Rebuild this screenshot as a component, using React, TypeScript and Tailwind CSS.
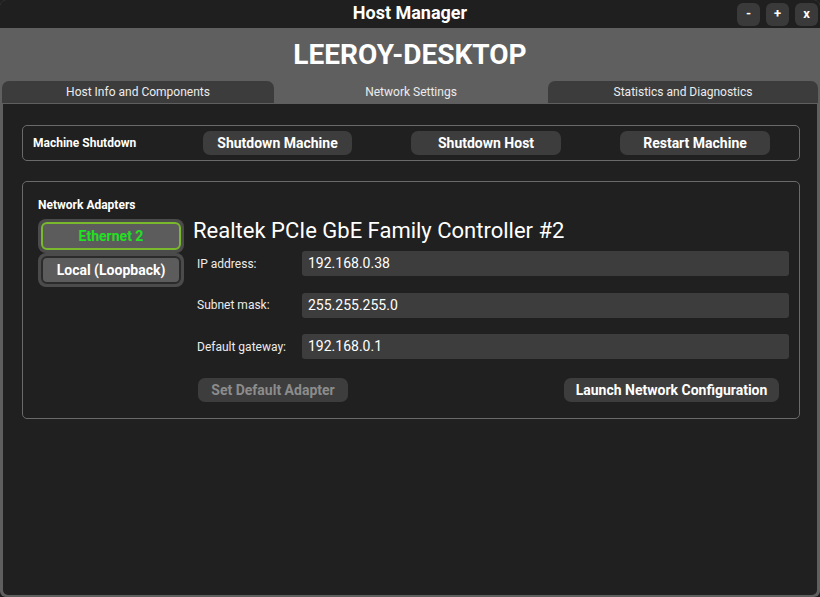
import React from 'react'

const font = { fontFamily: 'Roboto, "Liberation Sans", sans-serif' }

function PillButton({ label, width, disabled = false }: { label: string; width: string; disabled?: boolean }) {
  return (
    <button
      type="button"
      className={`${width} h-[24px] rounded-[7px] bg-[#3d3d3d] text-[14px] font-bold leading-none ${
        disabled ? 'text-[#8c8c8c]' : 'text-white'
      }`}
    >
      {label}
    </button>
  )
}

function AdapterButton({ label, selected }: { label: string; selected?: boolean }) {
  return (
    <div className="rounded-[8px] bg-[#4b4b4b] p-[3px]">
      <div
        className={`flex h-[28px] items-center justify-center rounded-[6px] border-2 bg-[#5c5c5c] text-[14px] font-bold ${
          selected ? 'border-[#7ab82e] text-[#22e022]' : 'border-[#2b2b2b] text-white'
        }`}
      >
        {label}
      </div>
    </div>
  )
}

function Field({ label, value }: { label: string; value: string }) {
  return (
    <div className="flex items-center">
      <div className="w-[109px] pl-[4px] text-[12px] text-[#ececec]">{label}</div>
      <div className="flex h-[25px] flex-1 items-center rounded-[3px] bg-[#3d3d3d] px-[6px] text-[14px] text-white">
        {value}
      </div>
    </div>
  )
}

export default function App() {
  return (
    <div className="h-[597px] w-[820px] overflow-hidden bg-[#1f1f1f]" style={font}>
      <div className="flex h-full flex-col overflow-hidden rounded-[6px] bg-[#5f5f5f]">
        {/* title bar */}
        <div className="grid h-[28px] grid-cols-[1fr_auto_1fr] items-center bg-[#1f1f1f]">
          <div />
          <div className="pb-[3px] text-[18px] font-bold leading-none text-white">Host Manager</div>
          <div className="flex justify-end gap-[6px] pr-[2px]">
            {['-', '+', 'x'].map((s) => (
              <div
                key={s}
                className="flex h-[23px] w-[23px] items-center justify-center rounded-[6px] bg-[#3a3a3a] text-[13px] font-bold text-white"
              >
                {s}
              </div>
            ))}
          </div>
        </div>

        {/* host name */}
        <div className="flex h-[53px] items-center justify-center text-[28px] font-bold text-white">
          LEEROY-DESKTOP
        </div>

        {/* tabs */}
        <div className="flex h-[22px] px-[2px] text-[12px] leading-none text-[#ececec]">
          <div className="flex w-[272px] items-center justify-center rounded-t-[7px] bg-[#3c3c3c]">Host Info and Components</div>
          <div className="flex w-[274px] items-center justify-center">Network Settings</div>
          <div className="flex flex-1 items-center justify-center rounded-t-[7px] bg-[#3c3c3c]">Statistics and Diagnostics</div>
        </div>

        {/* content */}
        <div className="mx-[3px] mb-[2px] mt-[1px] flex-1 rounded-b-[5px] bg-[#202020] pl-[19px] pr-[17px] pt-[21px]">
          <div className="flex h-[36px] items-center rounded-[5px] border border-[#6a6a6a]">
            <div className="w-[180px] pl-[10px] text-[12px] font-bold text-white">Machine Shutdown</div>
            <div className="flex gap-[59px]">
              <PillButton label="Shutdown Machine" width="w-[149px]" />
              <PillButton label="Shutdown Host" width="w-[150px]" />
              <PillButton label="Restart Machine" width="w-[150px]" />
            </div>
          </div>

          <div className="mt-[20px] rounded-[5px] border border-[#6a6a6a] pb-[16px] pl-[15px] pr-[10px] pt-[15px]">
            <div className="text-[12px] font-bold leading-[16px] text-white">Network Adapters</div>
            <div className="mt-[6px] flex">
              <div className="flex w-[146px] flex-col gap-0">
                <AdapterButton label="Ethernet 2" selected />
                <AdapterButton label="Local (Loopback)" />
              </div>
              <div className="ml-[9px] flex-1">
                <div className="text-[22px] leading-[24px] text-white">Realtek PCIe GbE Family Controller #2</div>
                <div className="mt-[8px] flex flex-col gap-[16.5px]">
                  <Field label="IP address:" value="192.168.0.38" />
                  <Field label="Subnet mask:" value="255.255.255.0" />
                  <Field label="Default gateway:" value="192.168.0.1" />
                </div>
                <div className="mt-[19px] flex justify-between pl-[5px] pr-[10px]">
                  <PillButton label="Set Default Adapter" width="w-[150px]" disabled />
                  <PillButton label="Launch Network Configuration" width="w-[215px]" />
                </div>
              </div>
            </div>
          </div>
        </div>
      </div>
    </div>
  )
}
